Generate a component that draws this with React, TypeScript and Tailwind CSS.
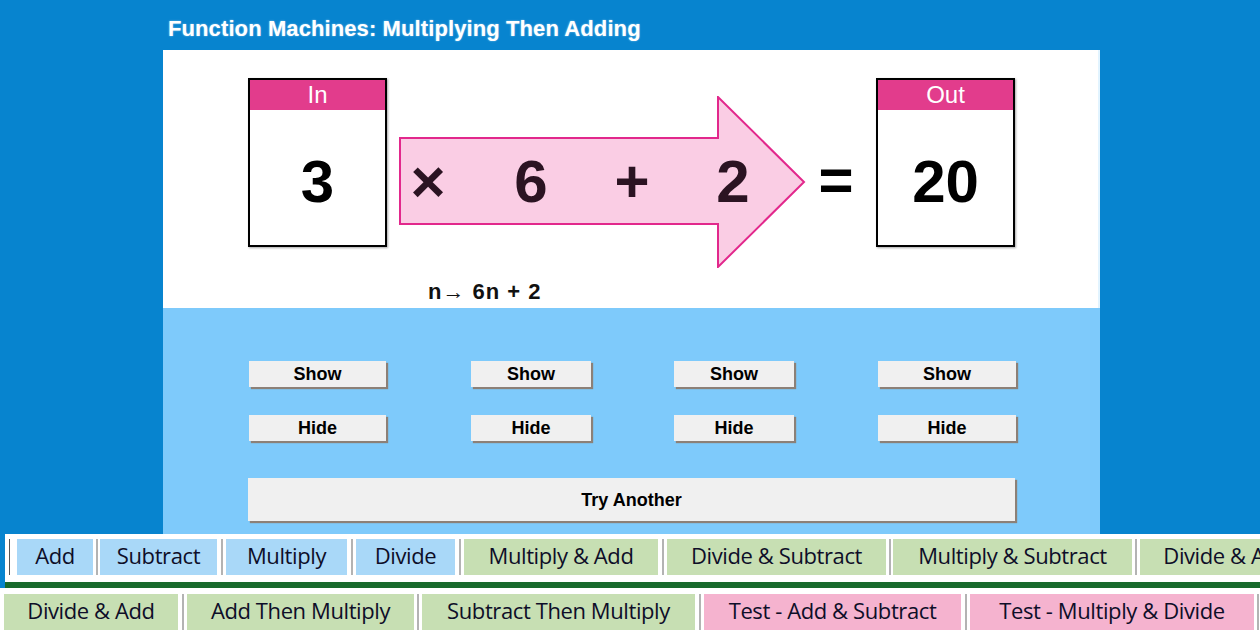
import React from "react";

type Tone = "blue" | "green" | "pink";

interface TabItem {
  label: string;
  width: string;
  tone: Tone;
  gap: string;
}

const toneBg: Record<Tone, string> = {
  blue: "bg-[#a9d8f8]",
  green: "bg-[#c7dfb3]",
  pink: "bg-[#f5b3cf]",
};

const topTabs: TabItem[] = [
  { label: "Add", width: "w-[76px]", tone: "blue", gap: "w-[7px]" },
  { label: "Subtract", width: "w-[117px]", tone: "blue", gap: "w-[9px]" },
  { label: "Multiply", width: "w-[121px]", tone: "blue", gap: "w-[9px]" },
  { label: "Divide", width: "w-[99px]", tone: "blue", gap: "w-[9px]" },
  { label: "Multiply & Add", width: "w-[194px]", tone: "green", gap: "w-[9px]" },
  { label: "Divide & Subtract", width: "w-[219px]", tone: "green", gap: "w-[7px]" },
  { label: "Multiply & Subtract", width: "w-[239px]", tone: "green", gap: "w-[8px]" },
  { label: "Divide & Add", width: "w-[174px]", tone: "green", gap: "w-[9px]" },
];

const bottomTabs: TabItem[] = [
  { label: "Divide & Add", width: "w-[174px]", tone: "green", gap: "w-[9px]" },
  { label: "Add Then Multiply", width: "w-[227px]", tone: "green", gap: "w-[8px]" },
  { label: "Subtract Then Multiply", width: "w-[273px]", tone: "green", gap: "w-[9px]" },
  { label: "Test - Add & Subtract", width: "w-[257px]", tone: "pink", gap: "w-[9px]" },
  { label: "Test - Multiply & Divide", width: "w-[284px]", tone: "pink", gap: "w-[7px]" },
];

function TabRow({ tabs }: { tabs: TabItem[] }) {
  return (
    <>
      {tabs.map((t, i) => (
        <React.Fragment key={i}>
          <div
            className={`${toneBg[t.tone]} ${t.width} h-full shrink-0 flex items-center justify-center pb-[3px] whitespace-nowrap text-[22px] font-medium text-[#0e0e28] font-['Open_Sans',sans-serif] tracking-[-0.4px]`}
          >
            {t.label}
          </div>
          <div className={`${t.gap} h-full shrink-0 flex justify-center`}>
            <div className="w-[2px] h-full bg-[#b3b3b3]" />
          </div>
        </React.Fragment>
      ))}
    </>
  );
}

function ValueBox({ label, value }: { label: string; value: string }) {
  return (
    <div className="w-[139px] h-[169px] shrink-0 border-2 border-black bg-white flex flex-col shadow-[1px_1px_2px_rgba(0,0,0,0.35)]">
      <div className="h-[30px] bg-[#e23c8c] flex items-center justify-center text-white text-[24px] leading-none">
        {label}
      </div>
      <div className="flex-1 flex items-center justify-center pt-[8px] text-[60px] font-bold leading-none text-black">
        {value}
      </div>
    </div>
  );
}

function FlatButton({ label, className }: { label: string; className: string }) {
  return (
    <button
      className={`${className} shrink-0 bg-[#f0f0f0] shadow-[2px_2px_1px_#8c8077] text-[18px] font-bold text-black leading-none flex items-center justify-center`}
    >
      {label}
    </button>
  );
}

function ButtonRow({ label }: { label: string }) {
  return (
    <div className="flex h-[26px]">
      <FlatButton label={label} className="ml-[86px] w-[137px] h-[26px]" />
      <FlatButton label={label} className="ml-[85px] w-[120px] h-[26px]" />
      <FlatButton label={label} className="ml-[83px] w-[120px] h-[26px]" />
      <FlatButton label={label} className="ml-[84px] w-[138px] h-[26px]" />
    </div>
  );
}

export default function App() {
  return (
    <div className="w-[1260px] h-[630px] overflow-hidden bg-[#0784cf] flex flex-col font-['Liberation_Sans',Arial,sans-serif]">
      {/* Title */}
      <div className="h-[50px] shrink-0 pl-[168px] pt-[16px]">
        <h1 className="text-[22px] leading-[25px] font-bold text-white tracking-[0.1px] [text-shadow:0_0_2px_rgba(220,240,255,0.6)]">
          Function Machines: Multiplying Then Adding
        </h1>
      </div>

      {/* Machine panel */}
      <div className="ml-[163px] w-[937px] shrink-0 flex flex-col">
        <div className="h-[258px] bg-white pt-[28px] border-r-2 border-[#e2f4ff]">
          <div className="flex items-start">
            <div className="ml-[85px]">
              <ValueBox label="In" value="3" />
            </div>

            {/* Arrow */}
            <div className="relative ml-[12px] mt-[18px] w-[407px] h-[172px] shrink-0">
              <svg className="absolute inset-0" width="407" height="172" viewBox="0 0 407 172">
                <path
                  d="M1 42 L319 42 L319 1 L405 86 L319 171 L319 128 L1 128 Z"
                  fill="#facde4"
                  stroke="#e2288c"
                  strokeWidth="2"
                  strokeLinejoin="miter"
                />
              </svg>
              <div className="absolute inset-0 flex items-center text-[60px] font-bold leading-none text-[#2b1322]">
                <span className="ml-[-1px] w-[60px] text-center">×</span>
                <span className="ml-[43px] w-[60px] text-center">6</span>
                <span className="ml-[41px] w-[60px] text-center">+</span>
                <span className="ml-[41px] w-[60px] text-center">2</span>
              </div>
            </div>

            <div className="w-[60px] h-[140px] mt-[32px] flex items-center justify-center text-[60px] font-bold leading-none text-black">
              =
            </div>

            <div className="ml-[10px]">
              <ValueBox label="Out" value="20" />
            </div>
          </div>

          <div className="ml-[265px] mt-[11px] text-[22px] leading-[25px] font-bold text-[#111] tracking-[1px]">
            n→ 6n + 2
          </div>
        </div>

        <div className="h-[226px] bg-[#7ecafb] pt-[53px]">
          <ButtonRow label="Show" />
          <div className="h-[28px]" />
          <ButtonRow label="Hide" />
          <FlatButton label="Try Another" className="ml-[85px] mt-[37px] w-[767px] h-[43px]" />
        </div>
      </div>

      {/* Tab strip */}
      <div className="h-[96px] shrink-0 bg-white flex flex-col">
        <div className="flex h-[54px]">
          <div className="w-[5px] h-full bg-[#0784cf] shrink-0" />
          <div className="flex-1 flex flex-col overflow-hidden">
            <div className="flex h-[48px] pt-[5px] pb-[7px]">
              <div className="w-[12px] h-full shrink-0 flex pl-[4px]">
                <div className="w-[1px] h-full bg-[#555]" />
              </div>
              <TabRow tabs={topTabs} />
            </div>
            <div className="h-[6px] bg-[#186a2c]" />
          </div>
        </div>
        <div className="flex h-[42px] pt-[6px] overflow-hidden">
          <div className="w-[4px] shrink-0" />
          <TabRow tabs={bottomTabs} />
        </div>
      </div>
    </div>
  );
}
